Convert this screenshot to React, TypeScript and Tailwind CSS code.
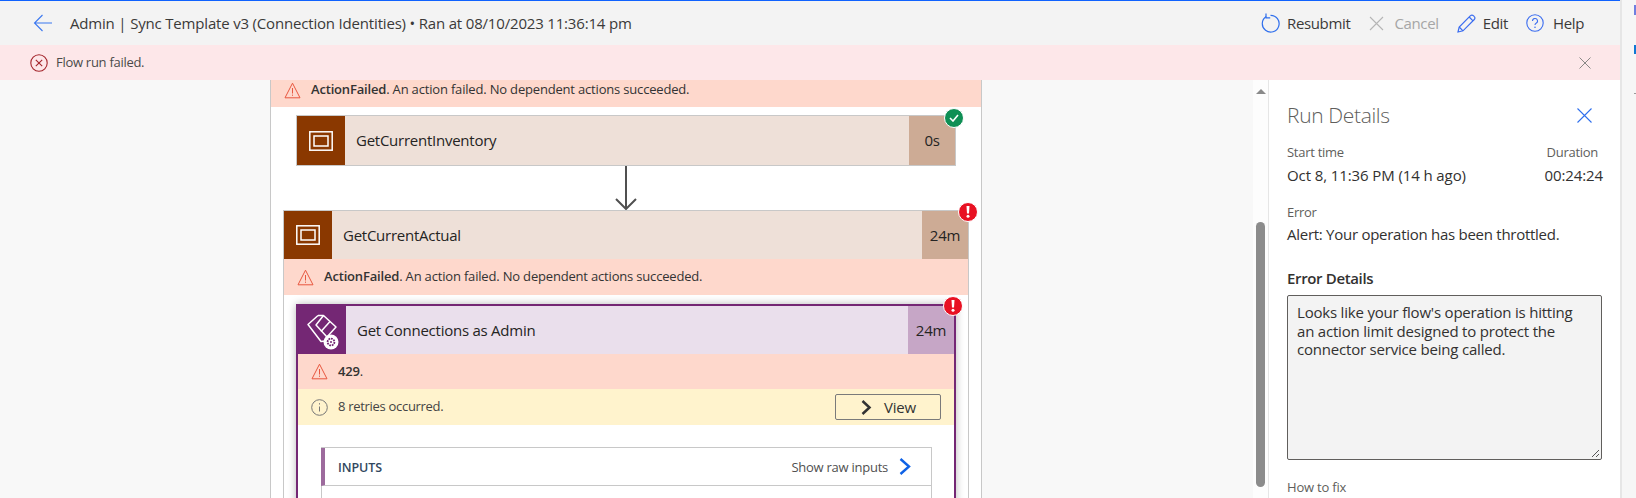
import React from "react";

const sans = "[font-family:'Open_Sans','Liberation_Sans',sans-serif]";

function Warn() {
  return (
    <svg width="17" height="17" viewBox="0 0 17 17" fill="none" className="shrink-0">
      <path d="M8.5 1.2 16 15.8H1Z" stroke="#e8573f" strokeWidth="1" strokeLinejoin="round" />
      <path d="M8.5 6v5.5M8.5 12.6v1.2" stroke="#e8573f" strokeWidth="1" />
    </svg>
  );
}

function ApiIcon() {
  return (
    <svg width="24" height="20" viewBox="0 0 24 20" fill="none" stroke="white" strokeWidth="1.5">
      <rect x="0.8" y="0.8" width="22.4" height="18.4" />
      <rect x="5" y="5" width="14" height="10" />
    </svg>
  );
}

function Bad({ className }: { className: string }) {
  return (
    <div className={`absolute w-[20px] h-[20px] rounded-full bg-[#e81123] border border-white flex items-center justify-center ${className}`}>
      <svg width="4" height="12" viewBox="0 0 4 12"><path d="M0.5 0h3L3 7.6H1Z" fill="white" /><circle cx="2" cy="10.2" r="1.5" fill="white" /></svg>
    </div>
  );
}

function ErrorBar({ children, className }: { children: React.ReactNode; className: string }) {
  return (
    <div className={`flex items-center bg-[#fed8cc] text-[13px] tracking-[-0.18px] text-[#333] ${className}`}>
      <Warn />
      <span className="ml-[10px]">{children}</span>
    </div>
  );
}

function Header({ icon, iconBg, bg, durBg, title, dur, className, indent }: { icon: React.ReactNode; iconBg: string; bg: string; durBg: string; title: string; dur: string; className: string; indent: string }) {
  return (
    <div className={`flex ${bg} ${className}`}>
      <div className={`w-[48px] shrink-0 flex items-center justify-center ${iconBg}`}>{icon}</div>
      <div className={`flex-1 flex items-center text-[15px] tracking-[-0.25px] text-[#252423] ${indent}`}>{title}</div>
      <div className={`w-[46px] shrink-0 flex items-center justify-center text-[15px] tracking-[-0.25px] text-[#252423] ${durBg}`}>{dur}</div>
    </div>
  );
}

export default function App() {
  return (
    <div className={`w-[1636px] h-[498px] overflow-hidden flex bg-[#f5f5f5] ${sans}`}>
      <div className="w-[1620px] shrink-0 flex flex-col border-t border-[#0f62fe] bg-white">
        {/* top bar */}
        <div className="h-[44px] shrink-0 flex items-center bg-[#f3f3f3] pl-[33px] pr-[36px]">
          <svg width="20" height="18" viewBox="0 0 20 18" fill="none" stroke="#3b78f0" strokeWidth="1.1">
            <path d="M19 9H1.5M9.5 1 1.5 9l8 8" />
          </svg>
          <span className="ml-[17px] text-[15px] tracking-[-0.18px] text-[#3b3a39]">Admin | Sync Template v3 (Connection Identities) • Ran at 08/10/2023 11:36:14 pm</span>
          <div className="ml-auto flex items-center text-[15px] tracking-[-0.35px] text-[#3b3a39]">
            <svg width="19" height="20" viewBox="0 0 19 20" fill="none" stroke="#2f6fed" strokeWidth="1.2">
              <path d="M5.2 3.6A8.4 8.4 0 1 0 9.5 2.3" />
              <path d="M5 0.6v4.2h4.2" />
            </svg>
            <span className="ml-[7px]">Resubmit</span>
            <svg width="15" height="15" viewBox="0 0 15 15" fill="none" stroke="#b5b5b5" strokeWidth="1.1" className="ml-[19px]">
              <path d="M1 1l13 13M14 1 1 14" />
            </svg>
            <span className="ml-[10px] text-[#a6a6a6]">Cancel</span>
            <svg width="19" height="19" viewBox="0 0 19 19" fill="none" stroke="#3b6df0" strokeWidth="1.2" className="ml-[18px]">
              <path d="M1 18l1.2-5L13.5 1.7a2 2 0 0 1 2.9 0l.9.9a2 2 0 0 1 0 2.9L6 16.8Z" />
              <path d="M2.2 13 6 16.8M12.2 3l3.8 3.8" />
            </svg>
            <span className="ml-[7px]">Edit</span>
            <svg width="18" height="18" viewBox="0 0 18 18" fill="none" className="ml-[18px]">
              <circle cx="9" cy="9" r="8.2" stroke="#3b6df0" strokeWidth="1.1" />
              <path d="M6.5 7a2.5 2.5 0 1 1 3.6 2.2c-.8.4-1.1.9-1.1 1.8" stroke="#3b6df0" strokeWidth="1.1" />
              <circle cx="9" cy="13.2" r=".8" fill="#3b6df0" />
            </svg>
            <span className="ml-[9px]">Help</span>
          </div>
        </div>

        {/* banner */}
        <div className="h-[35px] shrink-0 flex items-center bg-[#fde7e9] pl-[30px] pr-[29px]">
          <svg width="18" height="18" viewBox="0 0 18 18" fill="none" stroke="#a4262c" strokeWidth="1.1">
            <circle cx="9" cy="9" r="8.2" />
            <path d="M5.8 5.8l6.4 6.4M12.2 5.8l-6.4 6.4" />
          </svg>
          <span className="ml-[8px] text-[13px] tracking-[-0.28px] text-[#4a4a4a]">Flow run failed.</span>
          <svg width="12" height="12" viewBox="0 0 12 12" fill="none" stroke="#8a8886" strokeWidth="1" className="ml-auto">
            <path d="M.5.5l11 11M11.5.5l-11 11" />
          </svg>
        </div>

        {/* body */}
        <div className="flex-1 min-h-0 flex">
          {/* canvas */}
          <div className="w-[1253px] shrink-0 bg-[#f8f8f8] pl-[270px] overflow-hidden">
            <div className="w-[712px] h-full bg-white border-x border-[#c8c8c8]">
              <ErrorBar className="h-[27px] pl-[13px] pb-[7px]"><b className="font-semibold">ActionFailed</b>. An action failed. No dependent actions succeeded.</ErrorBar>

              <div className="relative mt-[8px] ml-[25px] w-[660px] border border-[#c8c8c8]">
                <Header icon={<ApiIcon />} iconBg="bg-[#8a3800]" bg="bg-[#eee0d8]" durBg="bg-[#cdab95]" title="GetCurrentInventory" dur="0s" className="h-[49px]" indent="pl-[11px]" />
                <div className="absolute -top-[8px] -right-[9px] w-[20px] h-[20px] rounded-full bg-[#0f8f55] border border-white flex items-center justify-center">
                  <svg width="10" height="8" viewBox="0 0 10 8" fill="none" stroke="white" strokeWidth="1.6"><path d="M1 4l3 3 5-6" /></svg>
                </div>
              </div>

              <div className="flex justify-center h-[44px]">
                <svg width="22" height="44" viewBox="0 0 22 44" fill="none" stroke="#505050" strokeWidth="2">
                  <path d="M11 0v43M1 33l10 10 10-10" />
                </svg>
              </div>

              <div className="relative ml-[12px] w-[686px] h-[300px] border border-[#c8c8c8]">
                <Header icon={<ApiIcon />} iconBg="bg-[#8a3800]" bg="bg-[#eee0d8]" durBg="bg-[#cdab95]" title="GetCurrentActual" dur="24m" className="h-[48px]" indent="pl-[11px]" />
                <Bad className="-top-[9px] -right-[10px]" />
                <ErrorBar className="h-[36px] pl-[13px]"><b className="font-semibold">ActionFailed</b>. An action failed. No dependent actions succeeded.</ErrorBar>

                <div className="relative mt-[9px] ml-[12px] w-[660px] h-[300px] border-2 border-[#742774] shadow-[0_0_8px_rgba(0,0,0,0.28)]">
                  <Header
                    icon={
                      <svg width="48" height="48" viewBox="0 0 48 48" fill="none" stroke="white" strokeWidth="1.5" strokeLinejoin="round">
                        <path d="M20 9.5 10 18.5 23 35.5 27 35" />
                        <path d="M20 9.5h5.5L38 21 29 31 18 19 25.5 9.5" />
                        <path d="M32 15.5 23 25.5" />
                        <circle cx="33" cy="36" r="7.5" fill="white" stroke="none" />
                        <circle cx="33" cy="36" r="3.4" stroke="#742774" strokeWidth="1.8" strokeDasharray="1.8 .8" />
                        <circle cx="33" cy="36" r="1" fill="#742774" stroke="none" />
                      </svg>
                    }
                    iconBg="bg-[#742774]"
                    bg="bg-[#eadfec]"
                    durBg="bg-[#c6a6c6]"
                    title="Get Connections as Admin"
                    dur="24m"
                    className="h-[48px]"
                    indent="pl-[11px]"
                  />
                  <Bad className="-top-[10px] -right-[9px]" />
                  <ErrorBar className="h-[35px] pl-[13px]"><b className="font-semibold">429</b>.</ErrorBar>
                  <div className="h-[36px] flex items-center bg-[#fff3cd] pl-[13px] pr-[13px]">
                    <svg width="17" height="17" viewBox="0 0 17 17" fill="none" stroke="#767676" strokeWidth="1" className="shrink-0">
                      <circle cx="8.5" cy="8.5" r="7.8" />
                      <path d="M8.5 7.5v5M8.5 4.2v1.3" />
                    </svg>
                    <span className="ml-[10px] text-[13px] tracking-[-0.3px] text-[#444]">8 retries occurred.</span>
                    <div className="ml-auto w-[106px] h-[26px] flex items-center border border-[#7a7a7a] rounded-[2px] pl-[25px] text-[15px] tracking-[-0.25px] text-[#333]">
                      <svg width="11" height="15" viewBox="0 0 11 15" fill="none" stroke="#333" strokeWidth="2.5"><path d="M1.5 1l7 6.5-7 6.5" /></svg>
                      <span className="ml-[12px]">View</span>
                    </div>
                  </div>
                  <div className="mt-[22px] ml-[23px] w-[611px] h-[100px] border border-[#c8c8c8] border-l-0">
                    <div className="h-[38px] flex items-center border-b border-[#c8c8c8] border-l-[4px] border-l-[#9d6b9d] pl-[13px] pr-[20px] pt-[3px]">
                      <span className="text-[12.5px] font-semibold tracking-[-0.1px] text-[#31475e]">INPUTS</span>
                      <span className="ml-auto text-[13px] tracking-[-0.25px] text-[#505050]">Show raw inputs</span>
                      <svg width="12" height="17" viewBox="0 0 12 17" fill="none" stroke="#0f62e6" strokeWidth="2.4" className="ml-[11px] mt-[-3px]"><path d="M1.5 1l8.5 7.5-8.5 7.5" /></svg>
                    </div>
                    <div className="h-[60px] border-l border-[#c8c8c8]" />
                  </div>
                </div>
              </div>
            </div>
          </div>

          {/* scrollbar */}
          <div className="w-[15px] shrink-0 bg-[#fdfdfd] flex flex-col items-center">
            <div className="mt-[9px] w-0 h-0 border-x-[5px] border-x-transparent border-b-[5px] border-b-[#8a8a8a]" />
            <div className="mt-[128px] w-[9px] h-[265px] rounded-[5px] bg-[#8c8c8c]" />
          </div>

          {/* panel */}
          <div className="flex-1 min-w-0 border-l border-[#e6e6e6] bg-white pl-[18px] pr-[18px] text-[#3b3a39]">
            <div className="mt-[21px] flex items-center justify-between pr-[10px]">
              <span className="text-[21px] font-light tracking-[-0.35px] leading-[28px] text-[#605e5c]">Run Details</span>
              <svg width="15" height="15" viewBox="0 0 15 15" fill="none" stroke="#2f6fed" strokeWidth="1.1"><path d="M.5.5l14 14M14.5.5l-14 14" /></svg>
            </div>
            <div className="mt-[15px] flex justify-between text-[13px] tracking-[-0.28px] text-[#605e5c] leading-[16px]">
              <span>Start time</span>
              <span className="mr-[4px]">Duration</span>
            </div>
            <div className="mt-[6px] flex justify-between text-[15px] tracking-[-0.1px] text-[#323130] leading-[19px]">
              <span>Oct 8, 11:36 PM (14 h ago)</span>
              <span className="mr-[-1px]">00:24:24</span>
            </div>
            <div className="mt-[19px] text-[13px] tracking-[-0.28px] text-[#605e5c] leading-[16px]">Error</div>
            <div className="mt-[5px] text-[15px] tracking-[-0.27px] text-[#323130] leading-[19px]">Alert: Your operation has been throttled.</div>
            <div className="mt-[25px] text-[15px] font-semibold tracking-[-0.35px] text-[#323130] leading-[19px]">Error Details</div>
            <div className="mt-[7px] relative w-[315px] h-[165px] border border-[#605e5c] rounded-[2px] bg-[#f3f3f3] pl-[9px] pr-[20px] pt-[7px] text-[15px] tracking-[-0.2px] leading-[18.5px] text-[#323130]">
              Looks like your flow's operation is hitting an action limit designed to protect the connector service being called.
              <svg width="9" height="9" viewBox="0 0 9 9" fill="none" stroke="#555" strokeWidth="1" className="absolute right-[1px] bottom-[1px]"><path d="M8 1 1 8M8 5 5 8" /></svg>
            </div>
            <div className="mt-[19px] text-[13px] tracking-[-0.2px] text-[#605e5c] leading-[16px]">How to fix</div>
          </div>
        </div>
      </div>

      {/* neighbouring strip */}
      <div className="flex-1 border-l-2 border-[#e6e6e6] bg-[#f6f6f6] flex flex-col items-end">
        <div className="mt-[5px] w-[2px] h-[10px] bg-[#6f7fe0]" />
        <div className="mt-[30px] w-[2px] h-[9px] bg-[#0f78d4]" />
        <div className="mt-[39px] w-[2px] h-[1px] bg-[#9a9a9a]" />
      </div>
    </div>
  );
}
